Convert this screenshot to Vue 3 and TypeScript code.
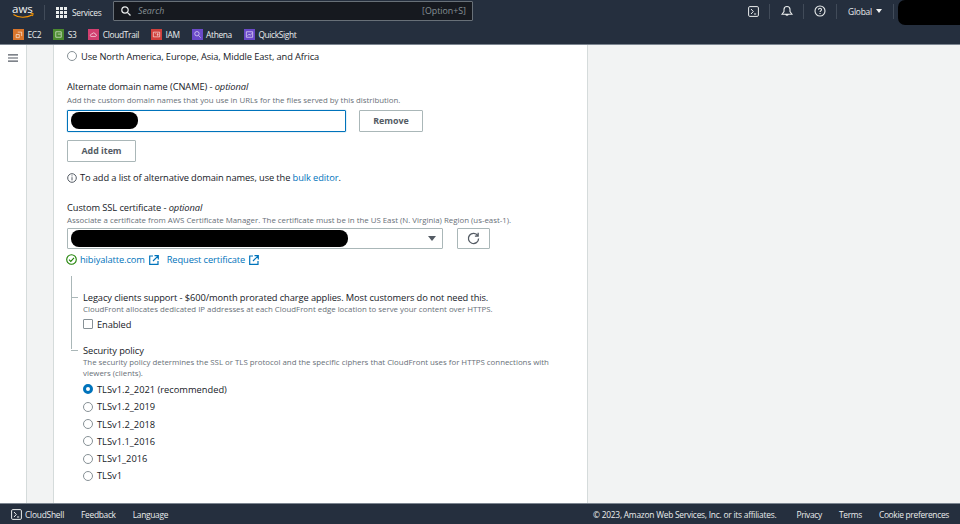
<script setup lang="ts">
interface Fav { name: string; color: string; glyph: string }
const favs: Fav[] = [
  { name: 'EC2', color: '#d8752b', glyph: 'M4 7h4v4H4zM6 4h5v5' },
  { name: 'S3', color: '#4b8a2f', glyph: 'M3.500 3.500h7v7h-7zM6 6.500h4' },
  { name: 'CloudTrail', color: '#d13f70', glyph: 'M3.500 9.500c-1.500-2 .5-3.500 1.800-3C6 4 9 4.500 9 6.500c2-.2 2.500 2.500.5 3z' },
  { name: 'IAM', color: '#d0403c', glyph: 'M3 4h8v6H3zM5 6h1M8 6h1v2H8z' },
  { name: 'Athena', color: '#6a49c9', glyph: 'M3.500 6a2.800 2.800 0 1 0 5.600 0a2.800 2.800 0 1 0-5.600 0M8.500 8.500l2.500 2.500' },
  { name: 'QuickSight', color: '#6a49c9', glyph: 'M3 3.500h8v7H3zM4.500 8.500l2-2 1.500 1.500 2-2.500' }
]
const footerRight = ['Privacy', 'Terms', 'Cookie preferences']
const policies = ['TLSv1.2_2021 (recommended)', 'TLSv1.2_2019', 'TLSv1.2_2018', 'TLSv1.1_2016', 'TLSv1_2016', 'TLSv1']
</script>

<template>
  <div class="page">
    <header class="top">
      <div class="nav">
        <svg class="logo" width="24" height="15" viewBox="0 0 24 15">
          <text x="0" y="8.500" class="logo-text">aws</text>
          <path d="M1.500 10.500c5 3.500 13 3.500 18.500.5" fill="none" stroke="#ff9900" stroke-width="1.100" />
          <path d="M18.500 9.800l2.700-.3-.7 2.600" fill="none" stroke="#ff9900" stroke-width="1" />
        </svg>
        <i class="sep logo-sep"></i>
        <svg class="grid" width="11" height="11" viewBox="0 0 11 11" fill="#eaeded">
          <rect x="0" y="0" width="3" height="3" /><rect x="4" y="0" width="3" height="3" /><rect x="8" y="0" width="3" height="3" />
          <rect x="0" y="4" width="3" height="3" /><rect x="4" y="4" width="3" height="3" /><rect x="8" y="4" width="3" height="3" />
          <rect x="0" y="8" width="3" height="3" /><rect x="4" y="8" width="3" height="3" /><rect x="8" y="8" width="3" height="3" />
        </svg>
        <span class="services">Services</span>
        <div class="search">
          <svg width="10" height="10" viewBox="0 0 10 10" fill="none" stroke="#eaeded" stroke-width="1.200">
            <circle cx="4" cy="4" r="3.200" /><path d="M6.300 6.300L9.500 9.500" />
          </svg>
          <span class="search-ph">Search</span>
          <span class="search-key">[Option+S]</span>
        </div>
        <div class="nav-right">
          <svg class="nav-ico" width="11" height="11" viewBox="0 0 11 11" fill="none" stroke="#eaeded">
            <rect x=".6" y=".6" width="9.800" height="9.800" rx="1.200" /><path d="M3 3l2.300 2.500L3 8M6 8h2.200" />
          </svg>
          <i class="sep"></i>
          <svg class="nav-ico" width="12" height="12" viewBox="0 0 12 12" fill="none" stroke="#eaeded" stroke-width="1.100">
            <path d="M1 9.200h10L9 6.500V4.500a3 3 0 0 0-6 0v2zM4.800 9.500a1.300 1.300 0 0 0 2.400 0" />
          </svg>
          <i class="sep"></i>
          <svg class="nav-ico" width="12" height="12" viewBox="0 0 12 12" fill="none" stroke="#eaeded" stroke-width="1.100">
            <circle cx="6" cy="6" r="5" /><path d="M4.500 4.700c0-2 3-2 3 0 0 1.200-1.500 1.100-1.500 2.400M6 8v1" />
          </svg>
          <i class="sep"></i>
          <span class="region">Global</span>
          <i class="caret-white"></i>
          <i class="sep"></i>
          <i class="account"></i>
        </div>
      </div>
      <div class="favs">
        <div v-for="f in favs" :key="f.name" class="fav">
          <svg width="11" height="11" viewBox="0 0 14 14">
            <rect width="14" height="14" :fill="f.color" />
            <path :d="f.glyph" fill="none" stroke="#ffffff" stroke-opacity=".75" stroke-width="1" />
          </svg>
          <span>{{ f.name }}</span>
        </div>
      </div>
    </header>

    <div class="body">
      <aside class="side">
        <svg width="10" height="8" viewBox="0 0 10 8" stroke="#545b64" stroke-width="1.200">
          <path d="M0 .8h10M0 4h10M0 7.200h10" />
        </svg>
      </aside>
      <div class="gutter"></div>
      <main class="panel">
        <label class="radio-row first">
          <i class="radio"></i><span>Use North America, Europe, Asia, Middle East, and Africa</span>
        </label>

        <div class="label cname">Alternate domain name (CNAME) - <em>optional</em></div>
        <div class="desc cname-desc">Add the custom domain names that you use in URLs for the files served by this distribution.</div>
        <div class="input-row">
          <div class="input"><i class="mask mask-a"></i></div>
          <button class="btn remove">Remove</button>
        </div>
        <button class="btn add">Add item</button>
        <div class="info">
          <svg width="10" height="10" viewBox="0 0 10 10" fill="none" stroke="#545b64">
            <circle cx="5" cy="5" r="4.300" /><path d="M5 4.200v3.200M5 2.400v1" />
          </svg>
          <span>To add a list of alternative domain names, use the <a>bulk editor</a>.</span>
        </div>

        <div class="label ssl">Custom SSL certificate - <em>optional</em></div>
        <div class="desc ssl-desc">Associate a certificate from AWS Certificate Manager. The certificate must be in the US East (N. Virginia) Region (us-east-1).</div>
        <div class="select-row">
          <div class="select"><i class="mask mask-b"></i><i class="caret-dark"></i></div>
          <button class="btn refresh">
            <svg width="13" height="13" viewBox="0 0 12 12" fill="none" stroke="#545b64" stroke-width="1.200">
              <path d="M10 3.500A4.700 4.700 0 1 0 10.700 6M10.300 .8v3H7.300" />
            </svg>
          </button>
        </div>
        <div class="status">
          <svg class="ok" width="11" height="11" viewBox="0 0 11 11" fill="none" stroke="#1d8102" stroke-width="1.100">
            <circle cx="5.500" cy="5.500" r="4.800" /><path d="M3 5.600l1.800 1.800L8 3.900" />
          </svg>
          <a>hibiyalatte.com</a>
          <svg class="ext" width="10" height="10" viewBox="0 0 10 10" fill="none" stroke="#0073bb" stroke-width="1.200">
            <path d="M4 1H.7v8.300H9V6M5.500.7h3.800v3.800M9.200.8L4 6" />
          </svg>
          <a class="req">Request certificate</a>
          <svg class="ext" width="10" height="10" viewBox="0 0 10 10" fill="none" stroke="#0073bb" stroke-width="1.200">
            <path d="M4 1H.7v8.300H9V6M5.500.7h3.800v3.800M9.200.8L4 6" />
          </svg>
        </div>

        <div class="tree">
          <div class="branch legacy">
            <div class="label">Legacy clients support - $600/month prorated charge applies. Most customers do not need this.</div>
            <div class="desc">CloudFront allocates dedicated IP addresses at each CloudFront edge location to serve your content over HTTPS.</div>
            <label class="check-row"><i class="check"></i><span>Enabled</span></label>
          </div>
          <div class="branch security">
            <div class="label">Security policy</div>
            <div class="desc wrap">The security policy determines the SSL or TLS protocol and the specific ciphers that CloudFront uses for HTTPS connections with viewers (clients).</div>
            <label v-for="(p, i) in policies" :key="p" class="radio-row policy">
              <i class="radio" :class="{ on: i === 0 }"></i><span>{{ p }}</span>
            </label>
          </div>
        </div>
      </main>
      <div class="rest"></div>
    </div>

    <footer class="foot">
      <div class="foot-left">
        <svg width="11" height="11" viewBox="0 0 11 11" fill="none" stroke="#eaeded">
          <rect x=".6" y=".6" width="9.800" height="9.800" rx="1.200" /><path d="M3 3l2.300 2.500L3 8M6 8h2.200" />
        </svg>
        <span class="cs">CloudShell</span>
        <span class="fb">Feedback</span>
        <span class="lang">Language</span>
      </div>
      <div class="foot-right">
        <span class="copy">© 2023, Amazon Web Services, Inc. or its affiliates.</span>
        <span v-for="l in footerRight" :key="l" class="fl">{{ l }}</span>
      </div>
    </footer>
  </div>
</template>

<style>
html, body { margin: 0; overflow: hidden; }
</style>

<style scoped>
.page {
  width: 960px; height: 524px; display: flex; flex-direction: column; overflow: hidden;
  font-family: "Open Sans", "Noto Sans", sans-serif; font-size: 9.300px; letter-spacing: -0.09px; color: #16191f; background: #f2f3f3;
}
i { display: block; flex: none; font-style: normal; }
.top { height: 45px; flex: none; background: #252f3e; border-bottom: 1px solid #7c8590; box-sizing: border-box; color: #eaeded; }
.nav { height: 25px; display: flex; align-items: center; }
.logo { margin-left: 12px; flex: none; margin-top: -3px; overflow: visible; }
.logo-text { font-family: "Open Sans", sans-serif; font-size: 11.500px; letter-spacing: 0; fill: #f2f3f3; }
.sep { width: 1px; height: 15px; background: #414b59; flex: none; }
.logo-sep { margin-left: 8px; }
.grid { margin-left: 11px; flex: none; }
.services { margin-left: 5px; font-size: 8.400px; letter-spacing: -0.3px; width: 41px; flex: none; }
.search {
  width: 360px; height: 20px; flex: none; box-sizing: border-box; background: #16191f; border: 1px solid #687078;
  display: flex; align-items: center; padding: 0 6px 0 7px; margin-top: -3px; border-radius: 1px;
}
.search-ph { margin-left: 7px; font-style: italic; color: #879196; font-size: 8.800px; letter-spacing: 0; }
.search-key { margin-left: auto; color: #879196; font-size: 8.800px; letter-spacing: 0; }
.nav-right { display: flex; align-items: center; margin-left: 275px; flex: none; margin-top: -3px; }
.nav-ico { flex: none; }
.nav-right .nav-ico:nth-child(1) { margin-right: 10px; }
.nav-right .nav-ico:nth-child(3) { margin: 0 10px 0 11px; }
.nav-right .nav-ico:nth-child(5) { margin: 0 10.500px 0 9.500px; }
.region { margin-left: 11px; font-size: 8.400px; letter-spacing: -0.2px; width: 24px; flex: none; }
.caret-white { width: 0; height: 0; border: 3px solid transparent; border-top: 4px solid #f2f3f3; border-bottom: 0; margin: 0 11px 0 4px; }
.account { width: 62px; height: 25px; background: #000; border-radius: 7px 0 0 7px; margin-left: 4px; margin-top: 3px; }
.favs { height: 19px; display: flex; align-items: center; padding-left: 13px; gap: 12px; font-size: 8.400px; letter-spacing: -0.35px; }
.fav { display: flex; align-items: center; gap: 3.500px; }
.body { flex: 1; display: flex; min-height: 0; }
.side { width: 27px; flex: none; box-sizing: border-box; background: #fff; border-right: 1px solid #d5dbdb; padding: 9px 0 0 8px; }
.side svg { display: block; }
.gutter { width: 26px; flex: none; }
.panel {
  width: 535px; flex: none; box-sizing: border-box; background: #fff; border-left: 1px solid #d5dbdb; border-right: 1px solid #d5dbdb;
  padding: 0 0 0 13px; overflow: hidden;
}
.rest { flex: 1; }
.radio { width: 8px; height: 8px; border: 1px solid #879196; border-radius: 50%; background: #fff; }
.radio.on { width: 4px; height: 4px; border: 3px solid #0073bb; background: #fff; }
.radio-row { display: flex; align-items: center; gap: 4px; height: 17.300px; }
.first { margin-top: 2.500px; letter-spacing: -0.11px; }
.label { line-height: 13px; color: #16191f; }
.desc { font-size: 7.850px; letter-spacing: 0; line-height: 11px; color: #687078; white-space: nowrap; }
.desc.wrap { white-space: normal; width: 480px; }
.cname { margin-top: 15px; }
.cname-desc { margin-top: 2px; }
.input-row { display: flex; margin-top: 4px; gap: 13px; }
.input {
  width: 279px; height: 22px; box-sizing: border-box; border: 1px solid #0073bb; border-radius: 1px;
  display: flex; align-items: center; padding-left: 3px; box-shadow: 0 0 1px #0073bb;
}
.mask { background: #000; border-radius: 8px; height: 17px; }
.mask-a { width: 67px; }
.mask-b { width: 277px; }
.btn {
  box-sizing: border-box; background: #fff; border: 1px solid #aab7b8; border-radius: 1px; color: #545b64;
  font: 700 8.900px "Open Sans", "Noto Sans", sans-serif; padding: 0; display: flex; align-items: center; justify-content: center;
}
.remove { width: 64px; height: 22px; }
.add { width: 69px; height: 22px; margin-top: 8px; }
.info { display: flex; align-items: center; gap: 3px; margin-top: 10px; height: 12px; letter-spacing: -0.11px; }
a { color: #0073bb; }
.ssl { margin-top: 17px; }
.ssl-desc { margin-top: 1px; }
.select-row { display: flex; gap: 14px; margin-top: 2px; }
.select {
  width: 376px; height: 21px; box-sizing: border-box; border: 1px solid #aab7b8; border-radius: 1px;
  display: flex; align-items: center; justify-content: space-between; padding: 0 6px 0 3px;
}
.caret-dark { width: 0; height: 0; border: 4px solid transparent; border-top: 5px solid #545b64; border-bottom: 0; }
.refresh { width: 33px; height: 21px; }
.status { display: flex; align-items: center; height: 14px; margin-top: 4px; letter-spacing: -0.11px; }
.ok { margin-left: -1px; margin-right: 3px; }
.ext { margin-left: 4px; }
.req { margin-left: 8px; }
.tree { margin: 9px 0 0 4px; position: relative; }
.tree::before { content: ""; position: absolute; left: 0; top: 0; height: 73px; width: 1px; background: #aab7b8; }
.branch { position: relative; padding-left: 12px; }
.branch::before { content: ""; position: absolute; left: 0; width: 7px; height: 1px; background: #aab7b8; }
.legacy { padding-top: 15px; }
.legacy::before { top: 21px; }
.security { margin-top: 14px; }
.security::before { top: 6px; }
.check-row { display: flex; align-items: center; gap: 4px; margin-top: 4px; height: 11px; }
.check { width: 8px; height: 8px; border: 1px solid #879196; border-radius: 1px; }
.policy { letter-spacing: 0; }
.policy:first-of-type { margin-top: 2px; }
.foot {
  height: 21px; flex: none; box-sizing: border-box; background: #252f3e; border-top: 1px solid #7c8590; color: #eaeded;
  display: flex; align-items: center; justify-content: space-between; font-size: 8.400px; letter-spacing: -0.3px;
}
.foot-left { display: flex; align-items: center; padding-left: 11px; }
.cs { margin-left: 3px; letter-spacing: -0.23px; }
.fb { margin-left: 17px; }
.lang { margin-left: 17px; }
.foot-right { display: flex; align-items: center; padding-right: 11px; gap: 17px; }
.copy { margin-right: 3px; letter-spacing: -0.23px; }
</style>
